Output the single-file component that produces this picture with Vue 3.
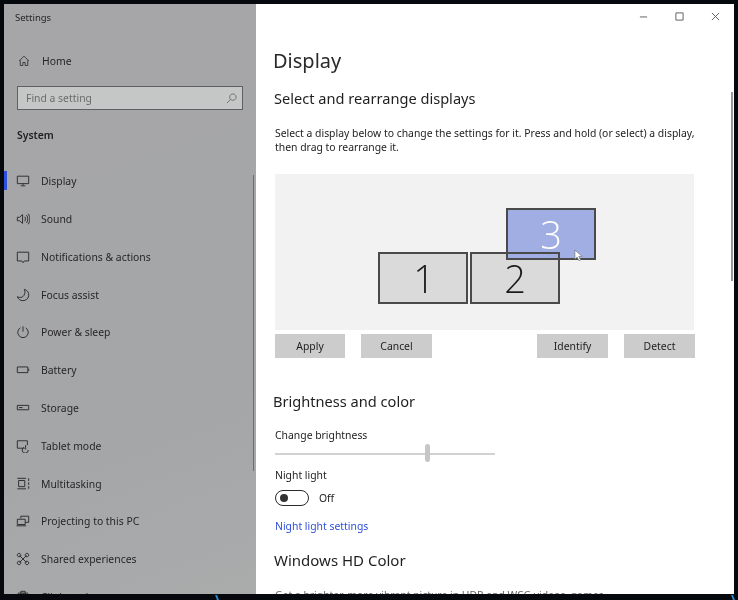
<script setup>
const nav = [
  { label: 'Display', active: true, paths: ['M1.5 2.5h13v8.5h-13z', 'M8 11v2', 'M5.5 13.5h5'] },
  { label: 'Sound', paths: ['M1.5 6v4h2.5l3.5 3V3L4 6z', 'M10 5.5c1 1.5 1 3.5 0 5', 'M12 3.5c2 3 2 6 0 9', 'M14 2c2.4 4 2.4 8 0 12'] },
  { label: 'Notifications & actions', paths: ['M1.5 2.5h13v10h-5L8 14.5l-1.5-2h-5z'] },
  { label: 'Focus assist', paths: ['M9.5 1.5c3.5 1 5.5 4 5 7.5-.5 3.5-3.5 5.5-6.5 5.5-3 0-5.5-1.7-6.500-4.500 3 1.500 6 1 7.500-1.500 1.500-2.500 1.500-4.500.5-7z'] },
  { label: 'Power & sleep', paths: ['M8 1.500v6', 'M5 3.200a6 6 0 1 0 6 0'] },
  { label: 'Battery', paths: ['M1.500 4.500h12v6.500h-12z', 'M14.500 6.500v2.500'] },
  { label: 'Storage', paths: ['M1.500 5h13v5h-13z', 'M3.500 7.500h4'] },
  { label: 'Tablet mode', paths: ['M10 10.500H1.500v-8.500h11.500v5', 'M9 9.500a3.500 3.500 0 1 0 5 3', 'M11 7v5'] },
  { label: 'Multitasking', paths: ['M1.500 1.500h10', 'M1.500 13.500h10', 'M3 4h7v7H3z', 'M14.500 1.500v3', 'M14.500 6v3', 'M14.500 10.500v3'] },
  { label: 'Projecting to this PC', paths: ['M5.500 5V2.500h9v7h-4', 'M1.500 6h9v6h-9z', 'M0.500 13.500h11'] },
  { label: 'Shared experiences', paths: ['M4 4l8 8', 'M12 4l-8 8', 'M3.500 1.500a2 2 0 1 1-.01 0z', 'M12.500 1.500a2 2 0 1 1-.01 0z', 'M3.500 10.500a2 2 0 1 1-.01 0z', 'M12.500 10.500a2 2 0 1 1-.01 0z'] },
  { label: 'Clipboard', paths: ['M2.500 3.500h11v11h-11z', 'M5.500 1.500h5v3h-5z'] }
]
</script>

<template>
  <div class="screen">
    <div class="window">
      <aside class="sidebar">
        <div class="app-title">Settings</div>
        <div class="home">
          <svg class="icon" viewBox="0 0 16 16"><path d="M1.500 8L8 1.500 14.500 8M3 7v7h3.500v-4h3v4H13V7" /></svg>
          <span>Home</span>
        </div>
        <div class="search">
          <span>Find a setting</span>
          <svg class="search-icon" viewBox="0 0 12 12"><path d="M7.500 1a3.500 3.500 0 1 1-.01 0zM5 7l-4 4" /></svg>
        </div>
        <div class="system">System</div>
        <nav class="nav">
          <div v-for="item in nav" :key="item.label" class="nav-row" :class="{ active: item.active }">
            <svg class="icon" viewBox="0 0 16 16"><path v-for="p in item.paths" :key="p" :d="p" /></svg>
            <span>{{ item.label }}</span>
          </div>
        </nav>
        <div class="side-scroll"></div>
      </aside>

      <main class="main">
        <div class="controls">
          <svg viewBox="0 0 10 10"><path d="M1 5.500h8" /></svg>
          <svg viewBox="0 0 10 10"><path d="M1 1h8v8H1z" /></svg>
          <svg viewBox="0 0 10 10"><path d="M1 1l8 8M9 1l-8 8" /></svg>
        </div>
        <h1>Display</h1>
        <h2 class="h-select">Select and rearrange displays</h2>
        <p class="intro">Select a display below to change the settings for it. Press and hold (or select) a display, then drag to rearrange it.</p>

        <div class="canvas">
          <div class="monitor m1">1</div>
          <div class="monitor m2">2</div>
          <div class="monitor m3">3</div>
          <div class="overlap"></div>
          <svg class="cursor" viewBox="0 0 11 14"><path d="M1 1v10l2.500-2.200 2 4 1.800-.9-2-3.900H9z" /></svg>
        </div>

        <div class="buttons">
          <button class="btn">Apply</button>
          <button class="btn">Cancel</button>
          <span class="spacer"></span>
          <button class="btn">Identify</button>
          <button class="btn">Detect</button>
        </div>

        <h2 class="h-bright">Brightness and color</h2>
        <div class="label-brightness">Change brightness</div>
        <div class="slider"><span class="thumb"></span></div>
        <div class="label-night">Night light</div>
        <div class="toggle-row">
          <span class="toggle"><span class="knob"></span></span>
          <span>Off</span>
        </div>
        <div class="link">Night light settings</div>
        <h2 class="h-hd">Windows HD Color</h2>
        <p class="cut">Get a brighter, more vibrant picture in HDR and WCG videos, games</p>
        <div class="main-scroll"></div>
      </main>
    </div>
    <span class="taskbar-mark one"></span>
    <span class="taskbar-mark two"></span>
  </div>
</template>

<style scoped>
.screen {
  position: relative;
  width: 738px;
  height: 600px;
  box-sizing: border-box;
  padding: 4px;
  background: #05080c;
  overflow: hidden;
  font-family: "Noto Sans", "Open Sans", sans-serif;
  font-size: 10.400px;
  color: #1c1c1c;
}
.window {
  display: flex;
  width: 730px;
  height: 590px;
  overflow: hidden;
  filter: blur(0.300px);
}
.sidebar {
  position: relative;
  flex: 0 0 252px;
  box-sizing: border-box;
  background: linear-gradient(160deg, #a6a6a8 0%, #a5a6a8 70%, #aaabab 100%);
  color: #262626;
}
.app-title {
  padding: 7px 0 0 11px;
  height: 14px;
  line-height: 14px;
  font-size: 9.500px;
}
.home {
  display: flex;
  align-items: center;
  margin: 27px 0 0 14px;
  height: 18px;
}
.home span { margin-left: 12px; }
.home .icon {
  flex-basis: 12px;
  width: 12px;
  height: 12px;
}
.icon {
  flex: 0 0 14px;
  width: 14px;
  height: 14px;
  fill: none;
  stroke: #2e2e2e;
  stroke-width: 1.100;
}
.search {
  display: flex;
  align-items: center;
  justify-content: space-between;
  box-sizing: border-box;
  width: 226px;
  height: 24px;
  margin: 16px 0 0 13px;
  padding: 0 5px 0 8px;
  background: #c5c6c6;
  border: 1.500px solid #5f6061;
  color: #6b6b6b;
}
.search-icon {
  width: 11px;
  height: 11px;
  fill: none;
  stroke: #6a6a6a;
  stroke-width: 1;
}
.system {
  margin: 17px 0 0 13px;
  height: 16px;
  line-height: 16px;
  font-weight: 600;
  color: #1e1e1e;
}
.nav { margin-top: 19.400px; }
.nav-row {
  position: relative;
  display: flex;
  align-items: center;
  height: 37.800px;
  padding-left: 12px;
}
.nav-row span { margin-left: 11px; }
.nav-row.active::before {
  content: "";
  position: absolute;
  left: 0;
  top: 9px;
  width: 3px;
  height: 19px;
  background: #2d4fe0;
}
.side-scroll {
  position: absolute;
  right: 2px;
  top: 171px;
  width: 1px;
  height: 296px;
  background: #6e6e70;
}
.main {
  position: relative;
  flex: 1;
  min-width: 0;
  box-sizing: border-box;
  padding-left: 19px;
  background: #fff;
}
.controls {
  position: absolute;
  top: 8px;
  right: 14px;
  display: flex;
  gap: 27px;
}
.controls svg {
  width: 9px;
  height: 9px;
  fill: none;
  stroke: #555;
  stroke-width: 1;
}
h1 {
  margin: 0 0 0 -2px;
  padding-top: 42px;
  height: 30px;
  line-height: 30px;
  font-size: 20px;
  font-weight: 400;
  color: #2a2a2a;
}
h2 {
  margin: 0;
  font-size: 14.600px;
  font-weight: 400;
  color: #1f1f1f;
  height: 22px;
  line-height: 22px;
}
.h-select { margin: 11px 0 0 -1px; }
.intro {
  margin: 17px 0 0;
  width: 425px;
  line-height: 14px;
  color: #222;
  height: 28px;
}
.canvas {
  position: relative;
  width: 419px;
  height: 156px;
  margin-top: 20px;
  background: #f2f2f2;
}
.monitor {
  position: absolute;
  box-sizing: border-box;
  width: 90px;
  height: 52px;
  border: 2px solid #4a4a4a;
  background: #dadada;
  display: flex;
  align-items: center;
  justify-content: center;
  font-family: "Open Sans", sans-serif;
  font-weight: 300;
  font-size: 38px;
  line-height: 1;
  color: #1b1b1b;
}
.m1 { left: 103px; top: 78px; padding-left: 2px; }
.m2 { left: 195px; top: 78px; }
.m3 { left: 231px; top: 34px; background: #a1aee3; color: #fff; }
.overlap {
  position: absolute;
  box-sizing: border-box;
  left: 233px;
  top: 78px;
  width: 52px;
  height: 8px;
  border-top: 2px solid #4a4a4a;
  border-right: 2px solid #4a4a4a;
}
.cursor {
  position: absolute;
  left: 299px;
  top: 75px;
  width: 10px;
  height: 13px;
  fill: #fff;
  stroke: #777;
  stroke-width: 0.800;
}
.buttons {
  display: flex;
  width: 420px;
  margin-top: 4px;
}
.spacer { flex: 1; }
.btn {
  box-sizing: border-box;
  width: 71px;
  height: 24px;
  padding: 0;
  border: 0;
  background: #ccc;
  font: inherit;
  color: #222;
}
.btn:nth-child(1) { width: 70px; margin-right: 16px; }
.btn:nth-child(4) { margin-right: 16px; }
.h-bright { margin: 32px 0 0 -2px; }
.label-brightness {
  margin-top: 15px;
  height: 16px;
  line-height: 16px;
}
.slider {
  position: relative;
  width: 220px;
  height: 2px;
  margin-top: 10px;
  background: #d2d2d2;
}
.thumb {
  position: absolute;
  left: 150px;
  top: -9px;
  width: 5px;
  height: 18px;
  border-radius: 3px;
  background: #c6c6c6;
}
.label-night {
  margin-top: 12px;
  height: 16px;
  line-height: 16px;
}
.toggle-row {
  display: flex;
  align-items: center;
  gap: 10px;
  margin-top: 6px;
  height: 18px;
}
.toggle {
  position: relative;
  box-sizing: border-box;
  width: 34px;
  height: 16px;
  border: 1.500px solid #2a2a2a;
  border-radius: 8px;
}
.knob {
  position: absolute;
  left: 4px;
  top: 2.500px;
  width: 8px;
  height: 8px;
  border-radius: 50%;
  background: #333;
}
.link {
  margin-top: 11px;
  height: 16px;
  line-height: 16px;
  color: #2f4fd6;
}
.h-hd { margin: 15px 0 0 -1px; font-size: 15px; }
.cut {
  margin: 16px 0 0;
  white-space: nowrap;
  color: #666;
  line-height: 16px;
}
.main-scroll {
  position: absolute;
  right: 1px;
  top: 88px;
  width: 2px;
  height: 189px;
  background: #999;
}
.taskbar-mark {
  position: absolute;
  bottom: 0;
  width: 2px;
  height: 5px;
  background: #2a88c8;
  transform: skewX(20deg);
}
.one { left: 216px; }
.two { left: 732px; }
</style>
